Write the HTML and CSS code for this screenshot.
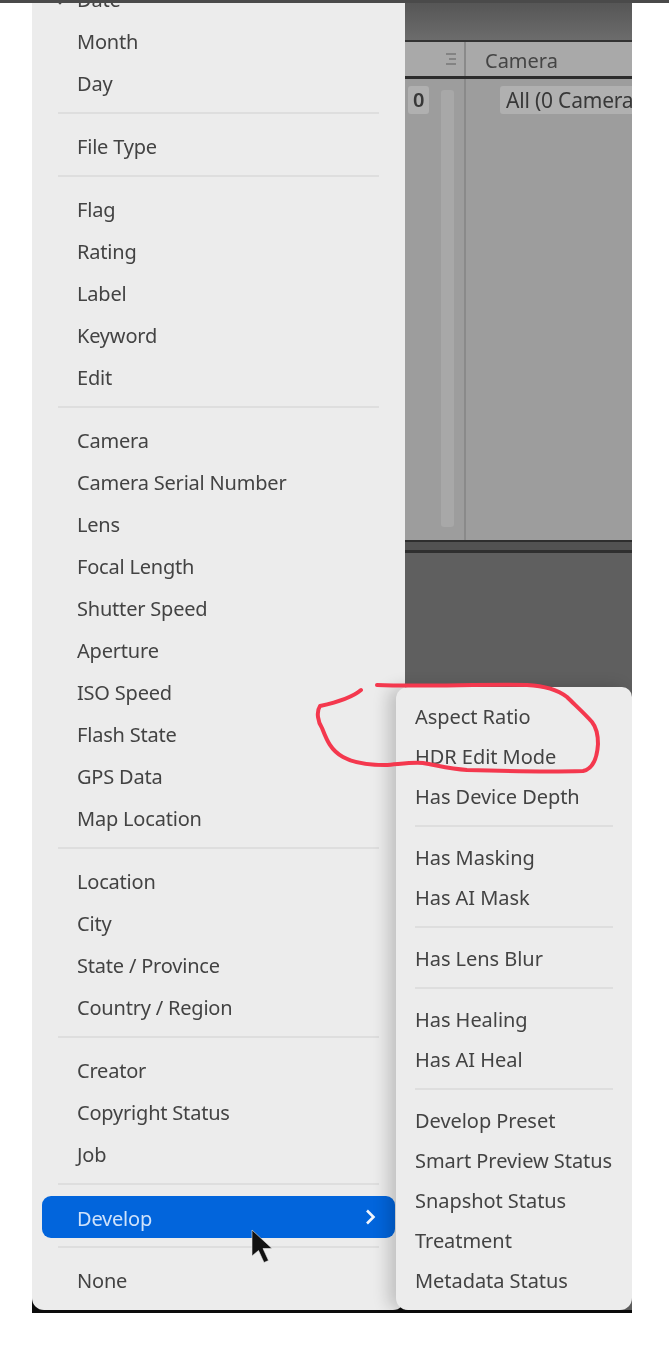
FILE: index.html
```html
<!DOCTYPE html>
<html lang="en">
<head>
<meta charset="utf-8">
<title>Lightroom filter menu</title>
<link rel="stylesheet" href="styles.css">
</head>
<body>
<div class="topbar"></div>
<div class="frame">
  <div class="menu">
    <div class="item"><span class="check"></span>Date</div>
    <div class="item">Month</div>
    <div class="item">Day</div>
    <div class="sep"></div>
    <div class="item">File Type</div>
    <div class="sep"></div>
    <div class="item">Flag</div>
    <div class="item">Rating</div>
    <div class="item">Label</div>
    <div class="item">Keyword</div>
    <div class="item">Edit</div>
    <div class="sep"></div>
    <div class="item">Camera</div>
    <div class="item">Camera Serial Number</div>
    <div class="item">Lens</div>
    <div class="item">Focal Length</div>
    <div class="item">Shutter Speed</div>
    <div class="item">Aperture</div>
    <div class="item">ISO Speed</div>
    <div class="item">Flash State</div>
    <div class="item">GPS Data</div>
    <div class="item">Map Location</div>
    <div class="sep"></div>
    <div class="item">Location</div>
    <div class="item">City</div>
    <div class="item">State / Province</div>
    <div class="item">Country / Region</div>
    <div class="sep"></div>
    <div class="item">Creator</div>
    <div class="item">Copyright Status</div>
    <div class="item">Job</div>
    <div class="sep"></div>
    <div class="item active"><span class="active-label">Develop</span>
      <svg class="chevron" viewBox="0 0 12 18" width="12" height="18"><path d="M3 2.5 9.5 9 3 15.5" fill="none" stroke="#f2f6fd" stroke-width="2.6"/></svg>
    </div>
    <div class="sep"></div>
    <div class="item">None</div>
  </div>
  <div class="panel">
    <div class="panel-top"></div>
    <div class="panel-head">
      <div class="col-a"><svg viewBox="0 0 12 14" width="12" height="14"><path d="M1 2h10M4 7h7M1 12h10" fill="none" stroke="#777" stroke-width="1.5"/></svg></div>
      <div class="col-b">Camera</div>
    </div>
    <div class="panel-list">
      <div class="col-a list-a">
        <span class="tag count">0</span>
        <span class="scroll"></span>
      </div>
      <div class="col-b list-b"><span class="tag all">All (0 Camera</span></div>
    </div>
    <div class="panel-foot"></div>
  </div>
  <div class="submenu">
    <div class="sub">Aspect Ratio</div>
    <div class="sub">HDR Edit Mode</div>
    <div class="sub">Has Device Depth</div>
    <div class="sep sub-sep"></div>
    <div class="sub">Has Masking</div>
    <div class="sub">Has AI Mask</div>
    <div class="sep sub-sep"></div>
    <div class="sub">Has Lens Blur</div>
    <div class="sep sub-sep"></div>
    <div class="sub">Has Healing</div>
    <div class="sub">Has AI Heal</div>
    <div class="sep sub-sep"></div>
    <div class="sub">Develop Preset</div>
    <div class="sub">Smart Preview Status</div>
    <div class="sub">Snapshot Status</div>
    <div class="sub">Treatment</div>
    <div class="sub">Metadata Status</div>
  </div>
</div>
<svg class="overlay" viewBox="0 0 669 1356" width="669" height="1356">
  <path class="scribble" d="M361 690C354 696 343 701 320 706C316 712 318 722 322 728C326 738 330 750 343 757C352 762 367 765 385 765C400 764 412 762 423 763C440 766 450 769 467 770C500 771 550 772 583 771C592 769 597 761 598 744C598 735 596 727 592 722C585 714 575 705 567 697C558 690 545 686 527 685C480 684 420 687 377 685"/>
  <path class="cursor" d="M252 1230v26l6.500-5.500 5.500 12 4.500-2-5.500-12h9z"/>
</svg>
</body>
</html>
```
FILE: styles.css
```css
* { box-sizing: border-box; }
html, body { margin: 0; padding: 0; background: #fff; }
body { width: 669px; height: 1356px; overflow: hidden; position: relative; font-family: "Noto Sans", "Liberation Sans", sans-serif; }

.topbar { height: 3px; background: #4a4a4a; }

.frame {
  position: relative;
  display: flex;
  width: 600px;
  height: 1310px;
  margin-left: 32px;
  padding-bottom: 3px;
  background: #0c0c0c;
  overflow: hidden;
  filter: blur(0.6px);
}

.menu {
  width: 373px;
  flex: none;
  background: #ececec;
  border-radius: 0 0 12px 12px;
  overflow: hidden;
  padding: 0 10px;
  color: #434343;
  font-size: 20px;
  letter-spacing: -0.2px;
}
.item {
  position: relative;
  height: 42px;
  line-height: 44px;
  padding-left: 35px;
  white-space: nowrap;
}
.item:first-child { margin-top: -25px; }
.check {
  position: absolute;
  left: 14px;
  top: 17px;
  width: 8px;
  height: 8px;
  background: #434343;
  transform: rotate(45deg);
}
.sep {
  height: 21px;
  margin: 0 16px;
  padding-top: 8px;
}
.sep::before {
  content: "";
  display: block;
  height: 2px;
  background: #dedede;
}
.active {
  background: #0265dc;
  color: #cfe2fb;
  border-radius: 9px;
  display: flex;
  justify-content: space-between;
  align-items: center;
  padding-right: 19px;
}
.active-label { padding-top: 4px; line-height: 38px; }

.panel { flex: 1; min-width: 0; display: flex; flex-direction: column; background: #5f5f5f; }
.panel-top {
  height: 39px;
  flex: none;
  background: linear-gradient(#565656, #6c6c6c);
  border-bottom: 2px solid #333;
}
.panel-head {
  height: 37px;
  flex: none;
  display: flex;
  background: #a9a9a9;
  border-bottom: 3px solid #2c2c2c;
  color: #444;
  font-size: 20px;
}
.col-a { width: 61px; flex: none; border-right: 2px solid #8a8a8a; }
.col-b { flex: 1; min-width: 0; padding-left: 19px; white-space: nowrap; overflow: hidden; line-height: 38px; }
.panel-head .col-a { display: flex; justify-content: flex-end; align-items: center; padding-right: 7px; }
.panel-list {
  height: 463px;
  flex: none;
  display: flex;
  background: #9d9d9d;
  border-bottom: 2px solid #2e2e2e;
  font-size: 20px;
  color: #383838;
}
.list-a { position: relative; padding-top: 7px; padding-left: 3px; }
.tag { display: inline-block; background: #b0b0b0; line-height: 28px; height: 28px; border-radius: 3px; }
.count { padding: 0 5px; font-weight: 600; }
.scroll {
  position: absolute;
  left: 36px;
  top: 11px;
  width: 13px;
  height: 437px;
  background: #a8a8a8;
  border-radius: 3px;
}
.list-b { padding-top: 7px; padding-left: 34px; line-height: 28px; overflow: hidden; }
.all { padding: 0 0 0 6px; border-radius: 3px 0 0 3px; font-size: 21px; letter-spacing: -0.2px; }
.panel-foot {
  flex: 1;
  background: #5f5f5f;
  border-top: 8px solid #525252;
  box-shadow: inset 0 3px 0 #2f2f2f;
}

.submenu {
  position: absolute;
  left: 364px;
  bottom: 3px;
  width: 236px;
  padding: 10px 0 9px;
  background: #ececec;
  border-radius: 12px 10px 12px 12px;
  box-shadow: -8px 0 16px rgba(0, 0, 0, 0.18);
  color: #434343;
  font-size: 20px;
  letter-spacing: -0.05px;
}
.sub { height: 40px; line-height: 40px; padding-left: 19px; white-space: nowrap; }
.sub-sep { margin: 0 19px; }

.overlay { position: absolute; left: 0; top: 0; pointer-events: none; }
.scribble { fill: none; stroke: #f4384e; stroke-width: 4; stroke-linecap: round; stroke-linejoin: round; }
.cursor { fill: #111; stroke: #e8e8e8; stroke-width: 0.6; }
```
